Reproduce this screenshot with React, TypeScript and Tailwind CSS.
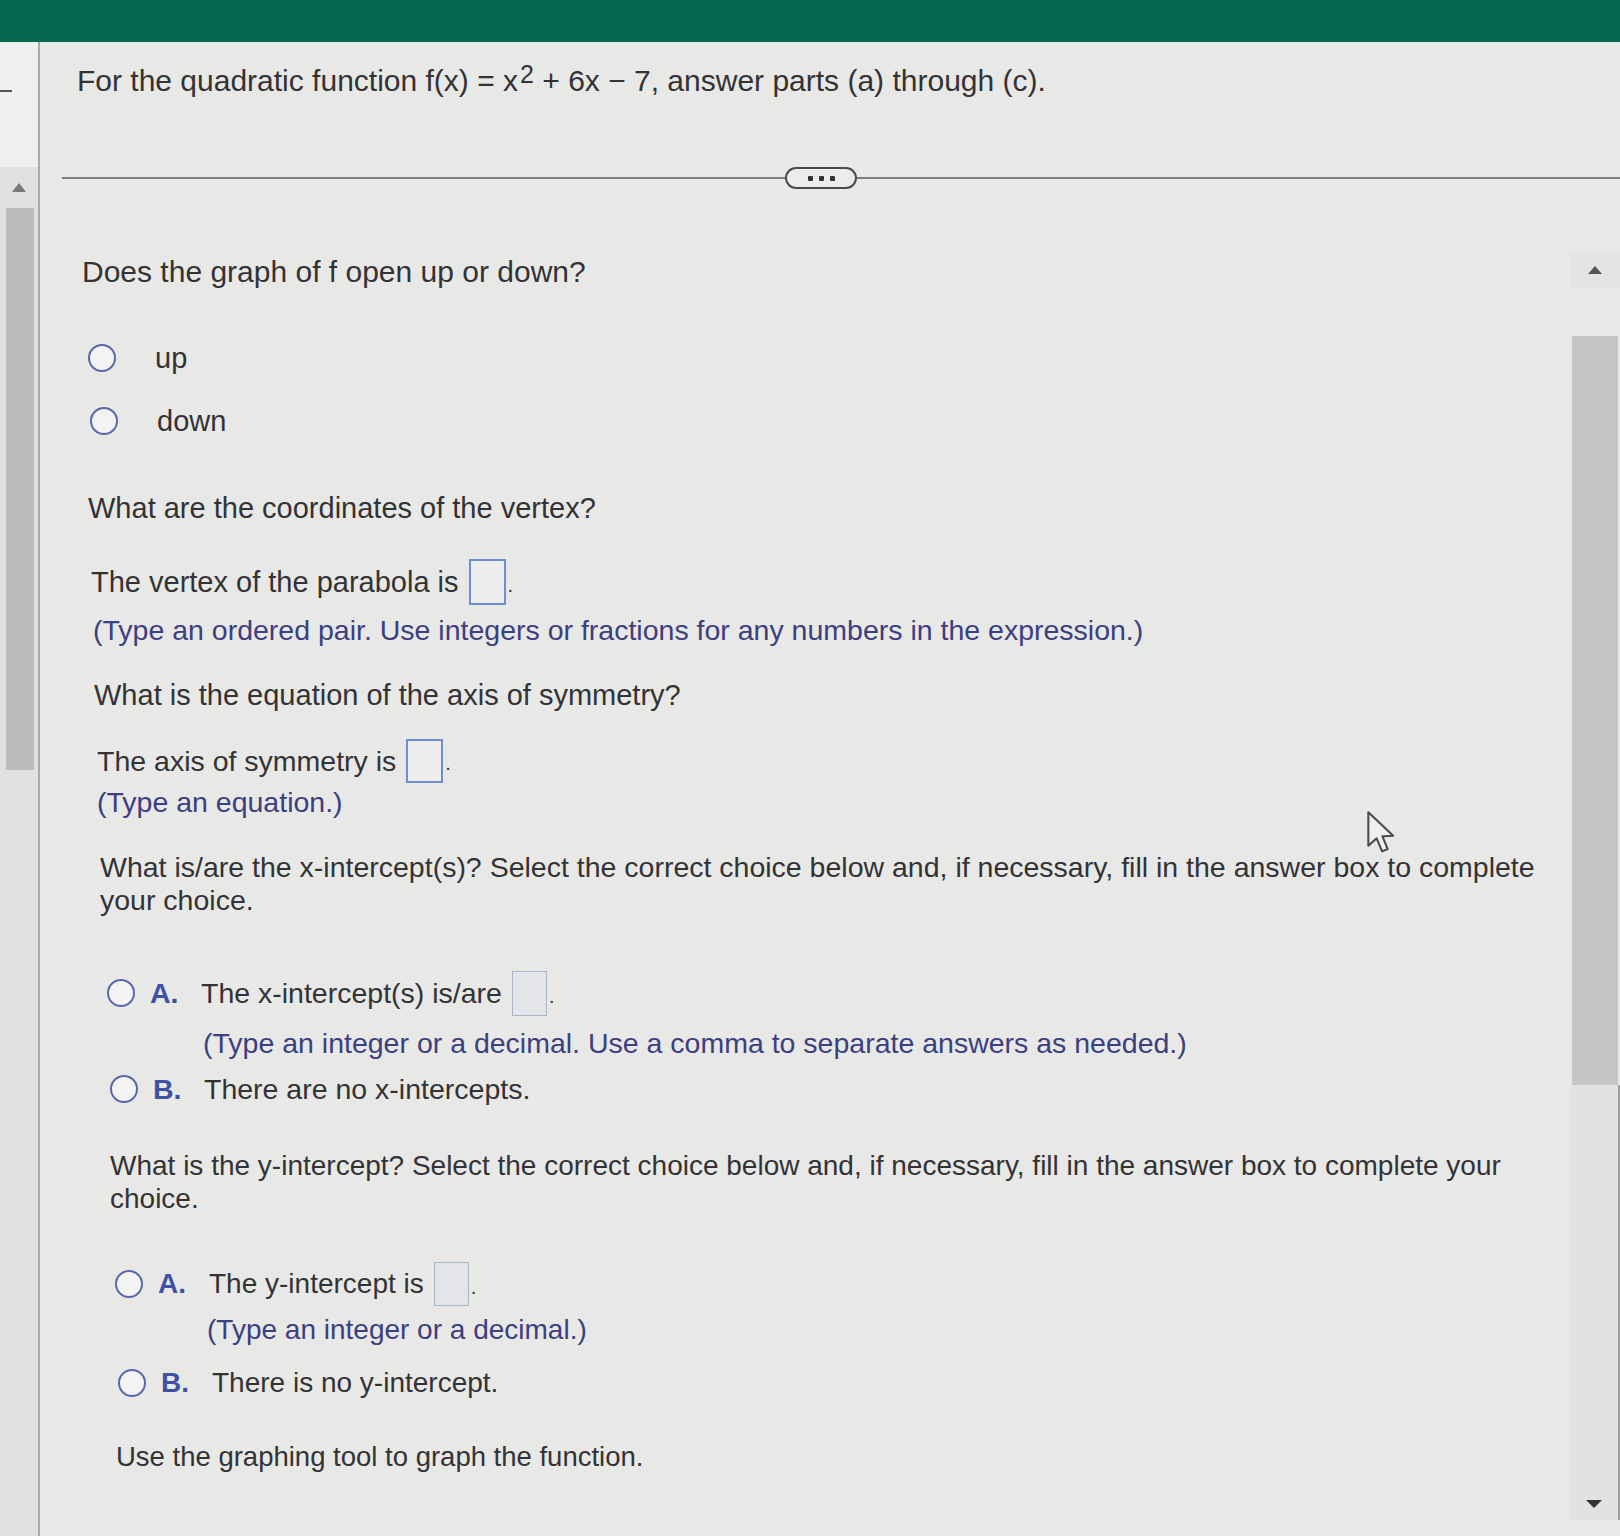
import React from "react";

// Radio button circle used by all choice rows.
function Radio({ className = "" }: { className?: string }) {
  return (
    <span
      className={`inline-block h-[28px] w-[28px] shrink-0 rounded-full border-[2.5px] border-[#5a68aa] bg-[#f3f3f3] ${className}`}
    />
  );
}

// Empty answer box. "blue" = focused style, "gray" = inside a choice.
function AnswerBox({ tone, w, h }: { tone: "blue" | "gray"; w: string; h: string }) {
  const cls =
    tone === "blue"
      ? "border-[2px] border-[#6f8ed2] bg-[#eeeeee]"
      : "border-[1.5px] border-[#a9b6c6] bg-[#e3e5e8]";
  return <span className={`ml-[10px] inline-block shrink-0 ${w} ${h} ${cls}`} />;
}

function Dot() {
  return <span className="ml-[2px] self-end pb-[10px] text-[20px] leading-[20px]">.</span>;
}

function Choice({
  letter,
  children,
  className,
}: {
  letter: string;
  children: React.ReactNode;
  className: string;
}) {
  return (
    <div className={`flex h-[46px] items-center ${className}`}>
      <Radio />
      <span className="ml-[15px] w-[51px] shrink-0 font-bold text-[#3f51a3]">{letter}</span>
      {children}
    </div>
  );
}

function Cursor() {
  return (
    <svg width="30" height="46" viewBox="0 0 13 20" className="absolute left-[1366px] top-[810px]">
      <path
        d="M1 1 L1 15.5 L4.6 12.3 L7 18 L9.4 17 L7.1 11.4 L11.8 11.2 Z"
        fill="#efefef"
        stroke="#4a4a4a"
        strokeWidth="0.9"
        strokeLinejoin="round"
      />
    </svg>
  );
}

export default function App() {
  const hint = "text-[#3c3f80]";

  return (
    <div className="relative flex h-[1536px] w-[1620px] flex-col overflow-hidden bg-[#e8e8e6] font-['Liberation_Sans',Arial,sans-serif] text-[#333336] leading-[34px]">
      <div className="h-[42px] shrink-0 bg-[#04684f]" />

      <div className="flex flex-1">
        {/* left rail with scrollbar */}
        <div className="flex w-[40px] shrink-0 flex-col border-r-2 border-[#a9a9a9] bg-[#efefef]">
          <div className="mt-[48px] h-[2px] w-[12px] bg-[#555555]" />
          <div className="mt-[75px] flex flex-1 flex-col bg-[#e0e0e0]">
            <div className="mx-auto mt-[16px] h-0 w-0 border-x-[7px] border-b-[9px] border-x-transparent border-b-[#7a7a7a]" />
            <div className="ml-[6px] mt-[16px] h-[562px] w-[28px] bg-[#bcbcbc]" />
          </div>
        </div>

        <div className="flex flex-1 flex-col">
          {/* title + divider */}
          <p className="ml-[37px] mt-[22px] text-[30px]">
            For the quadratic function f(x) = x
            <sup className="relative -top-[8px] ml-[2px] text-[25px]">2</sup> + 6x − 7, answer parts (a) through (c).
          </p>
          <div className="ml-[22px] mt-[69px] flex h-[22px] items-center">
            <div className="h-[2px] w-[723px] bg-[#7d7d7d]" />
            <div className="flex h-[22px] w-[72px] shrink-0 items-center justify-center gap-[6px] rounded-full border-[2.5px] border-[#4a4a4a] bg-[#ececec]">
              <span className="h-[5px] w-[5px] rounded-[1px] bg-[#333333]" />
              <span className="h-[5px] w-[5px] rounded-[1px] bg-[#333333]" />
              <span className="h-[5px] w-[5px] rounded-[1px] bg-[#333333]" />
            </div>
            <div className="h-[2px] flex-1 bg-[#7d7d7d]" />
          </div>

          <div className="flex flex-1">
            {/* question content */}
            <div className="flex-1 pr-[10px]">
              <p className="ml-[42px] mt-[66px] text-[30px]">Does the graph of f open up or down?</p>

              <div className="ml-[48px] mt-[52px] flex h-[34px] items-center text-[29px]">
                <Radio />
                <span className="ml-[39px]">up</span>
              </div>
              <div className="ml-[50px] mt-[29px] flex h-[34px] items-center text-[29px]">
                <Radio />
                <span className="ml-[39px]">down</span>
              </div>

              <p className="ml-[48px] mt-[53px] text-[29px]">What are the coordinates of the vertex?</p>

              <div className="ml-[51px] mt-[34px] flex h-[46px] items-center text-[29px]">
                <span>The vertex of the parabola is</span>
                <AnswerBox tone="blue" w="w-[37px]" h="h-[46px]" />
                <Dot />
              </div>
              <p className={`ml-[53px] mt-[8px] text-[28.5px] ${hint}`}>
                (Type an ordered pair. Use integers or fractions for any numbers in the expression.)
              </p>

              <p className="ml-[54px] mt-[31px] text-[29px]">What is the equation of the axis of symmetry?</p>

              <div className="ml-[57px] mt-[27px] flex h-[44px] items-center text-[28.5px]">
                <span>The axis of symmetry is</span>
                <AnswerBox tone="blue" w="w-[37px]" h="h-[44px]" />
                <Dot />
              </div>
              <p className={`ml-[57px] mt-[2px] text-[28.5px] ${hint}`}>(Type an equation.)</p>

              <p className="ml-[60px] mt-[32px] text-[28.5px] leading-[33px]">
                What is/are the x-intercept(s)? Select the correct choice below and, if necessary, fill in the answer box
                to complete your choice.
              </p>

              <Choice letter="A." className="ml-[67px] mt-[53px] text-[28.5px]">
                <span>The x-intercept(s) is/are</span>
                <AnswerBox tone="gray" w="w-[35px]" h="h-[45px]" />
                <Dot />
              </Choice>
              <p className={`ml-[163px] mt-[10px] text-[28.5px] ${hint}`}>
                (Type an integer or a decimal. Use a comma to separate answers as needed.)
              </p>
              <Choice letter="B." className="ml-[70px] mt-[6px] text-[28.5px]">
                <span>There are no x-intercepts.</span>
              </Choice>

              <p className="ml-[70px] mt-[37px] text-[28px] leading-[33px]">
                What is the y-intercept? Select the correct choice below and, if necessary, fill in the answer box to
                complete your choice.
              </p>

              <Choice letter="A." className="ml-[75px] mt-[46px] text-[28px]">
                <span>The y-intercept is</span>
                <AnswerBox tone="gray" w="w-[35px]" h="h-[44px]" />
                <Dot />
              </Choice>
              <p className={`ml-[167px] mt-[6px] text-[28px] ${hint}`}>(Type an integer or a decimal.)</p>
              <Choice letter="B." className="ml-[78px] mt-[13px] text-[28px]">
                <span>There is no y-intercept.</span>
              </Choice>

              <p className="ml-[76px] mt-[34px] text-[27.5px]">Use the graphing tool to graph the function.</p>
            </div>

            {/* right scrollbar */}
            <div className="flex w-[50px] shrink-0 flex-col pt-[64px]">
              <div className="flex h-[34px] items-center justify-center bg-[#e4e4e4]">
                <div className="h-0 w-0 border-x-[7px] border-b-[8px] border-x-transparent border-b-[#555555]" />
              </div>
              <div className="mx-[2px] mt-[49px] h-[749px] bg-[#c5c5c5]" />
              <div className="flex h-[435px] flex-col items-center justify-end border-r-2 border-[#9c9c9c] bg-[#e2e2e2] pb-[12px]">
                <div className="h-0 w-0 border-x-[8px] border-t-[8px] border-x-transparent border-t-[#333333]" />
              </div>
            </div>
          </div>
        </div>
      </div>

      <Cursor />
    </div>
  );
}
